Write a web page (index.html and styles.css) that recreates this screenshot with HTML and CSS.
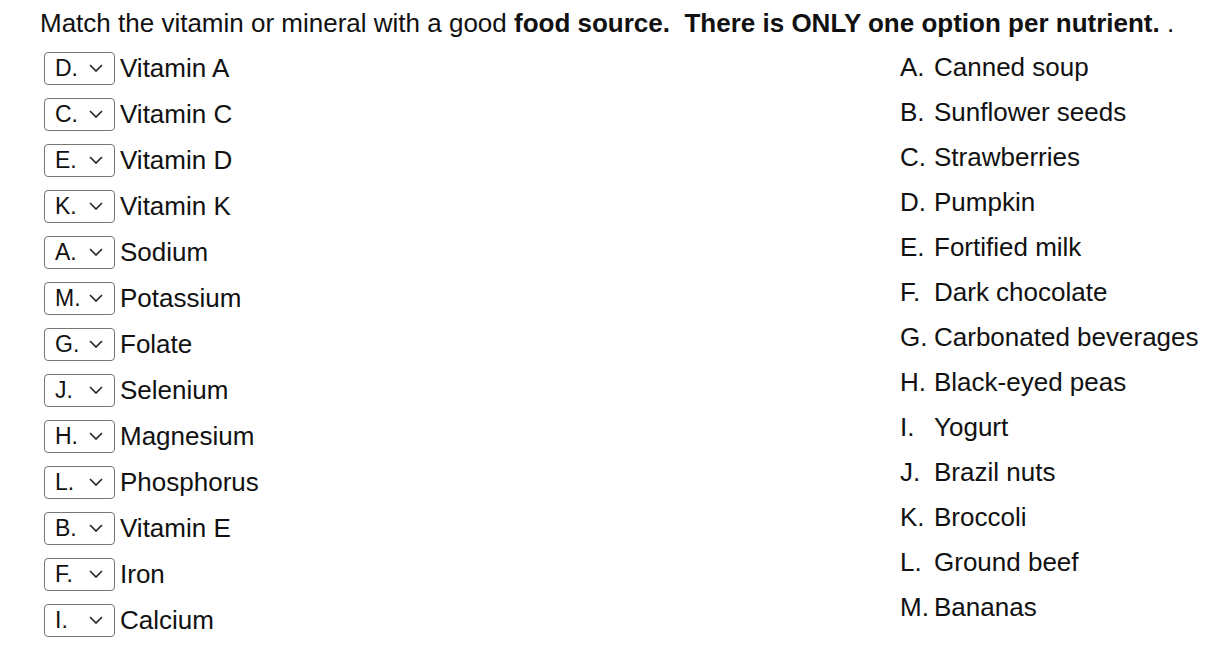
FILE: index.html
```html
<!DOCTYPE html>
<html>
<head>
<meta charset="utf-8">
<link rel="stylesheet" href="styles.css">
</head>
<body>
<div class="page">
  <p class="prompt">Match the vitamin or mineral with a good <b>food source.&nbsp; There is ONLY one option per nutrient.</b> .</p>
  <div class="columns">
    <div class="pairs">
      <div class="pair"><div class="sel"><span class="val">D.</span><svg class="chev" viewBox="0 0 14 8"><polyline points="1,1 7,7 13,1"/></svg></div><span class="term">Vitamin A</span></div>
      <div class="pair"><div class="sel"><span class="val">C.</span><svg class="chev" viewBox="0 0 14 8"><polyline points="1,1 7,7 13,1"/></svg></div><span class="term">Vitamin C</span></div>
      <div class="pair"><div class="sel"><span class="val">E.</span><svg class="chev" viewBox="0 0 14 8"><polyline points="1,1 7,7 13,1"/></svg></div><span class="term">Vitamin D</span></div>
      <div class="pair"><div class="sel"><span class="val">K.</span><svg class="chev" viewBox="0 0 14 8"><polyline points="1,1 7,7 13,1"/></svg></div><span class="term">Vitamin K</span></div>
      <div class="pair"><div class="sel"><span class="val">A.</span><svg class="chev" viewBox="0 0 14 8"><polyline points="1,1 7,7 13,1"/></svg></div><span class="term">Sodium</span></div>
      <div class="pair"><div class="sel"><span class="val">M.</span><svg class="chev" viewBox="0 0 14 8"><polyline points="1,1 7,7 13,1"/></svg></div><span class="term">Potassium</span></div>
      <div class="pair"><div class="sel"><span class="val">G.</span><svg class="chev" viewBox="0 0 14 8"><polyline points="1,1 7,7 13,1"/></svg></div><span class="term">Folate</span></div>
      <div class="pair"><div class="sel"><span class="val">J.</span><svg class="chev" viewBox="0 0 14 8"><polyline points="1,1 7,7 13,1"/></svg></div><span class="term">Selenium</span></div>
      <div class="pair"><div class="sel"><span class="val">H.</span><svg class="chev" viewBox="0 0 14 8"><polyline points="1,1 7,7 13,1"/></svg></div><span class="term">Magnesium</span></div>
      <div class="pair"><div class="sel"><span class="val">L.</span><svg class="chev" viewBox="0 0 14 8"><polyline points="1,1 7,7 13,1"/></svg></div><span class="term">Phosphorus</span></div>
      <div class="pair"><div class="sel"><span class="val">B.</span><svg class="chev" viewBox="0 0 14 8"><polyline points="1,1 7,7 13,1"/></svg></div><span class="term">Vitamin E</span></div>
      <div class="pair"><div class="sel"><span class="val">F.</span><svg class="chev" viewBox="0 0 14 8"><polyline points="1,1 7,7 13,1"/></svg></div><span class="term">Iron</span></div>
      <div class="pair"><div class="sel"><span class="val">I.</span><svg class="chev" viewBox="0 0 14 8"><polyline points="1,1 7,7 13,1"/></svg></div><span class="term">Calcium</span></div>
    </div>
    <div class="options">
      <div class="opt"><span class="letter">A.</span><span>Canned soup</span></div>
      <div class="opt"><span class="letter">B.</span><span>Sunflower seeds</span></div>
      <div class="opt"><span class="letter">C.</span><span>Strawberries</span></div>
      <div class="opt"><span class="letter">D.</span><span>Pumpkin</span></div>
      <div class="opt"><span class="letter">E.</span><span>Fortified milk</span></div>
      <div class="opt"><span class="letter">F.</span><span>Dark chocolate</span></div>
      <div class="opt"><span class="letter">G.</span><span>Carbonated beverages</span></div>
      <div class="opt"><span class="letter">H.</span><span>Black-eyed peas</span></div>
      <div class="opt"><span class="letter">I.</span><span>Yogurt</span></div>
      <div class="opt"><span class="letter">J.</span><span>Brazil nuts</span></div>
      <div class="opt"><span class="letter">K.</span><span>Broccoli</span></div>
      <div class="opt"><span class="letter">L.</span><span>Ground beef</span></div>
      <div class="opt"><span class="letter">M.</span><span>Bananas</span></div>
    </div>
  </div>
</div>
</body>
</html>
```

FILE: styles.css
```css
html, body {
  margin: 0;
  padding: 0;
  background: #ffffff;
}
body {
  font-family: "Liberation Sans", Arial, sans-serif;
  color: #111111;
  width: 1220px;
  height: 664px;
  overflow: hidden;
}
.page {
  padding: 8px 0 0 40px;
}
.prompt {
  margin: 0;
  font-size: 26px;
  line-height: 30px;
  white-space: nowrap;
}
.prompt b {
  font-weight: bold;
}
.columns {
  display: flex;
  margin-top: 7px;
}
.pairs {
  display: flex;
  flex-direction: column;
  gap: 13px;
  padding-top: 7px;
  margin-left: 4px;
  width: 856px;
}
.pair {
  display: flex;
  align-items: center;
  height: 33px;
}
.sel {
  box-sizing: border-box;
  width: 71px;
  height: 33px;
  border: 1px solid #767676;
  border-radius: 4px;
  display: flex;
  align-items: center;
  padding-left: 10px;
  background: #fff;
}
.val {
  font-size: 23px;
  width: 34px;
  color: #111;
}
.chev {
  width: 14px;
  height: 8px;
  fill: none;
  stroke: #222;
  stroke-width: 1.6;
  margin-top: -2px;
}
.term {
  font-size: 26px;
  margin-left: 5px;
}
.options {
  display: flex;
  flex-direction: column;
}
.opt {
  display: flex;
  align-items: center;
  height: 45px;
  font-size: 26px;
}
.letter {
  width: 34px;
}
```
